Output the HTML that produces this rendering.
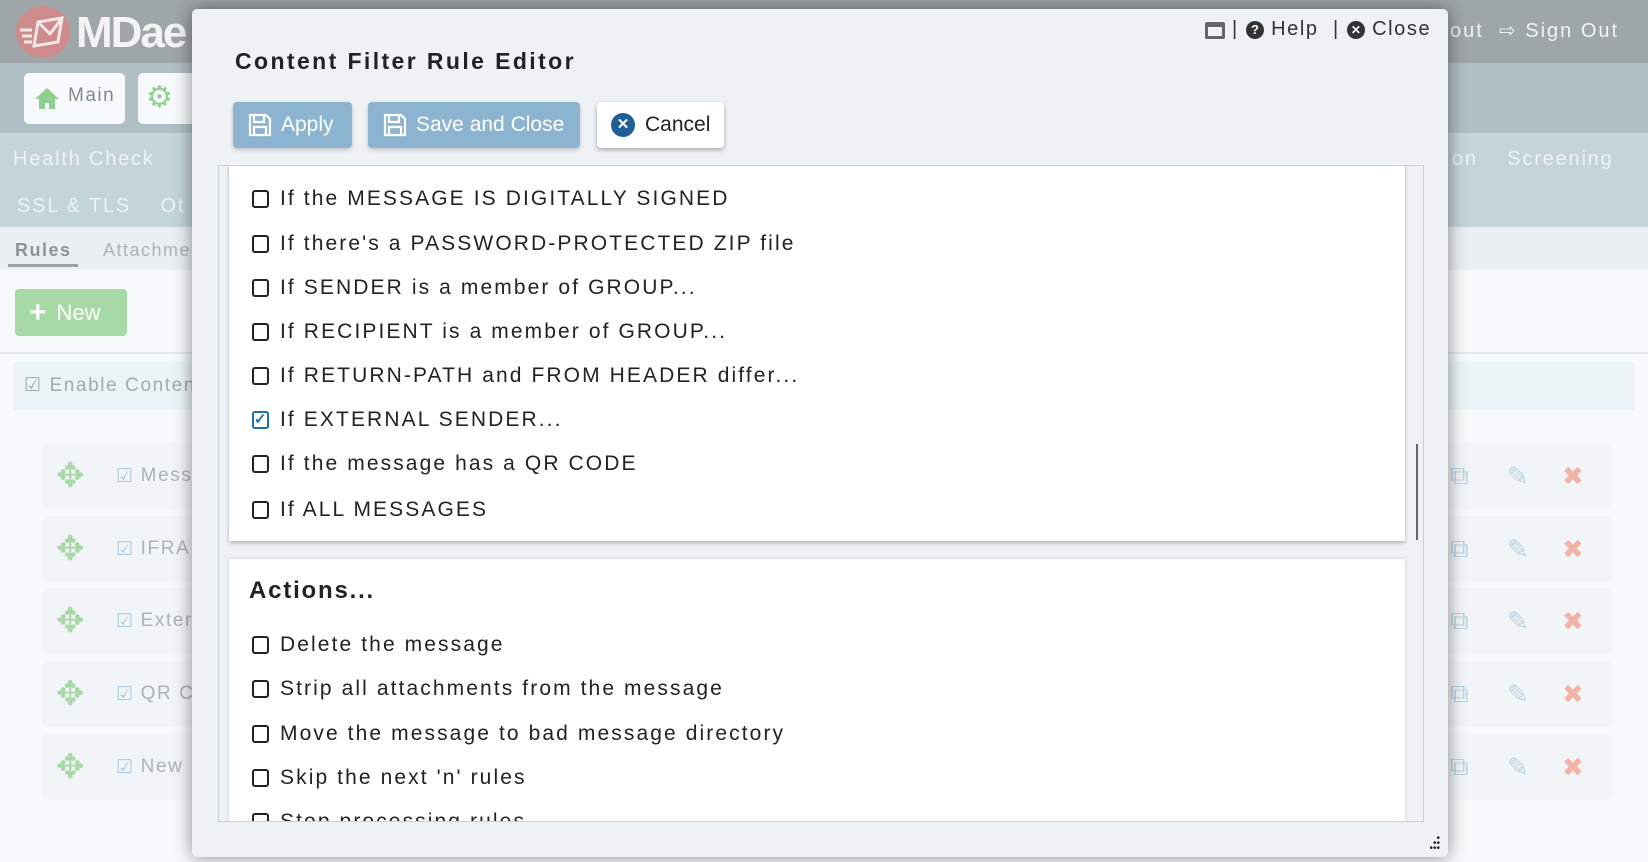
<!DOCTYPE html>
<html><head><meta charset="utf-8"><style>
*{box-sizing:border-box;margin:0;padding:0}
body{width:1648px;height:862px;overflow:hidden;position:relative;font-family:"Liberation Sans",sans-serif;background:#f7f9fa;letter-spacing:1px}
.abs{position:absolute}
.band1{left:0;top:0;width:1648px;height:63px;background:#9fa6a9}
.band2{left:0;top:63px;width:1648px;height:70px;background:#b0bec5}
.band3{left:0;top:133px;width:1648px;height:94px;background:#c4d4db}
.band4{left:0;top:227px;width:1648px;height:43px;background:#eaeff2}
.navt{color:#eef3f5;font-size:20px;letter-spacing:1.8px}
.row{left:42px;width:1571px;height:66px;background:#f2f5f7;border-radius:6px}
.rc{position:absolute;left:0;top:0;height:66px;width:100%;display:flex;align-items:center;font-size:19px;color:#aab3b8;letter-spacing:1.6px}
.drag{color:#a9d8a9;font-size:34px;margin-left:14px;width:60px}
.chk{color:#a9c8dc;margin-right:6px}
.ic{position:absolute;top:0;height:66px;display:flex;align-items:center;font-size:26px;letter-spacing:0}
.modal{left:192px;top:9px;width:1256px;height:848px;background:#eef2f5;border-radius:5px;box-shadow:0 0 18px rgba(0,0,0,.45)}
.btn{top:102px;height:46px;border-radius:4px;font-size:21px;display:flex;align-items:center;letter-spacing:0}
.blue{background:#8cb4d0;color:#fff;box-shadow:0 2px 4px rgba(0,0,0,.2)}
.item{left:252px;font-size:21px;color:#222;display:flex;align-items:center;height:30px;letter-spacing:2.1px}
.cb{width:17px;height:18px;border:2px solid #222;border-radius:3px;margin-right:11px;flex:none}
</style></head><body>
<div class="abs band1"></div>
<div class="abs" style="left:16px;top:6px;width:54px;height:52px;border-radius:50%;background:#cf8a8c"></div>
<svg class="abs" style="left:18px;top:12px" width="50" height="40"><g stroke="#f2e8e8" stroke-width="3" fill="none"><path d="M20 10 L44 6 L40 30 L16 34Z"/><path d="M20 10 L32 22 L44 6"/><path d="M2 18h12M4 24h10M6 30h8"/></g></svg>
<div class="abs" style="left:76px;top:8px;font-size:44px;font-weight:bold;color:#f4f4f4;letter-spacing:-2px">MDae</div>
<div class="abs" style="left:1450px;top:18px;font-size:20px;color:#f0f3f4;letter-spacing:2px">out &nbsp;⇨ Sign Out</div>
<div class="abs band2"></div>
<div class="abs" style="left:24px;top:73px;width:101px;height:51px;background:#f7f9fa;border-radius:5px"></div>
<svg class="abs" style="left:34px;top:86px" width="26" height="24"><path d="M13 2L1 13h4v10h6v-6h4v6h6V13h4z" fill="#8fcf8f"/></svg>
<div class="abs" style="left:68px;top:85px;font-size:19px;color:#7d8a90;letter-spacing:1.5px">Main</div>
<div class="abs" style="left:138px;top:73px;width:60px;height:51px;background:#f7f9fa;border-radius:5px"></div>
<div class="abs" style="left:146px;top:80px;font-size:30px;color:#8fcf8f">⚙</div>
<div class="abs band3"></div>
<div class="abs navt" style="left:13px;top:148px">Health Check</div>
<div class="abs navt" style="left:1452px;top:148px">on &nbsp;&nbsp;&nbsp;Screening</div>
<div class="abs navt" style="left:17px;top:195px">SSL &amp; TLS &nbsp;&nbsp;&nbsp;Ot</div>
<div class="abs band4"></div>
<div class="abs" style="left:15px;top:240px;font-size:18px;color:#8a9399;font-weight:bold;letter-spacing:1.5px">Rules</div>
<div class="abs" style="left:8px;top:264px;width:70px;height:3px;background:#9aa2a7"></div>
<div class="abs" style="left:103px;top:240px;font-size:18px;color:#aab3b8;letter-spacing:1.5px">Attachme</div>
<div class="abs" style="left:15px;top:289px;width:112px;height:47px;background:#a6d9a6;border-radius:4px;color:#fff;font-size:22px;display:flex;align-items:center;padding-left:14px;letter-spacing:0"><b style="font-size:30px;margin-right:10px">+</b>New</div>
<div class="abs" style="left:0;top:352px;width:1648px;height:2px;background:#e3e8eb"></div>
<div class="abs" style="left:14px;top:362px;width:1620px;height:48px;background:#eaf4f6"></div>
<div class="abs" style="left:24px;top:374px;font-size:19px;color:#a0aab0;letter-spacing:1.6px">☑ Enable Conten</div>

<div class="abs row" style="top:443px"><div class="rc"><span class="drag">✥</span><span class="chk">☑</span>Mess</div><div class="ic" style="left:1408px;color:#b9d3e2">⧉</div><div class="ic" style="left:1465px;color:#b9d3e2">✎</div><div class="ic" style="left:1520px;color:#f2b3a6">✖</div></div>
<div class="abs row" style="top:516px"><div class="rc"><span class="drag">✥</span><span class="chk">☑</span>IFRA</div><div class="ic" style="left:1408px;color:#b9d3e2">⧉</div><div class="ic" style="left:1465px;color:#b9d3e2">✎</div><div class="ic" style="left:1520px;color:#f2b3a6">✖</div></div>
<div class="abs row" style="top:588px"><div class="rc"><span class="drag">✥</span><span class="chk">☑</span>Exter</div><div class="ic" style="left:1408px;color:#b9d3e2">⧉</div><div class="ic" style="left:1465px;color:#b9d3e2">✎</div><div class="ic" style="left:1520px;color:#f2b3a6">✖</div></div>
<div class="abs row" style="top:661px"><div class="rc"><span class="drag">✥</span><span class="chk">☑</span>QR C</div><div class="ic" style="left:1408px;color:#b9d3e2">⧉</div><div class="ic" style="left:1465px;color:#b9d3e2">✎</div><div class="ic" style="left:1520px;color:#f2b3a6">✖</div></div>
<div class="abs row" style="top:734px"><div class="rc"><span class="drag">✥</span><span class="chk">☑</span>New</div><div class="ic" style="left:1408px;color:#b9d3e2">⧉</div><div class="ic" style="left:1465px;color:#b9d3e2">✎</div><div class="ic" style="left:1520px;color:#f2b3a6">✖</div></div>

<div class="abs modal"></div>
<div class="abs" style="left:1205px;top:22px;width:20px;height:17px;border:3px solid #666;border-top-width:5px;border-radius:2px"></div>
<div class="abs" style="left:1232px;top:18px;font-size:20px;color:#333;display:flex;align-items:center;letter-spacing:1.6px">|&nbsp;<span style="display:inline-block;width:18px;height:18px;border-radius:50%;background:#333;color:#fff;font-size:13px;text-align:center;line-height:18px;font-weight:bold;letter-spacing:0">?</span>&nbsp;Help&nbsp;&nbsp;|&nbsp;<span style="display:inline-block;width:18px;height:18px;border-radius:50%;background:#333;color:#fff;font-size:12px;text-align:center;line-height:18px;font-weight:bold;letter-spacing:0">✕</span>&nbsp;Close</div>
<div class="abs" style="left:235px;top:48px;font-size:23px;font-weight:bold;color:#222;letter-spacing:2.4px">Content Filter Rule Editor</div>
<div class="abs btn blue" style="left:233px;width:119px;padding-left:14px"><svg width="26" height="26" style="margin-right:8px"><path d="M3 3h16l4 4v16H3z M7 3v7h10V3 M7 23v-8h12v8" fill="none" stroke="#fff" stroke-width="2.2"/></svg>Apply</div>
<div class="abs btn blue" style="left:368px;width:212px;padding-left:14px"><svg width="26" height="26" style="margin-right:8px"><path d="M3 3h16l4 4v16H3z M7 3v7h10V3 M7 23v-8h12v8" fill="none" stroke="#fff" stroke-width="2.2"/></svg>Save and Close</div>
<div class="abs btn" style="left:597px;width:127px;background:#fff;color:#222;padding-left:14px;box-shadow:0 2px 5px rgba(0,0,0,.3)"><span style="display:inline-block;width:24px;height:24px;border-radius:50%;background:#1d5f96;color:#fff;font-size:15px;font-weight:bold;text-align:center;line-height:24px;margin-right:10px">✕</span>Cancel</div>
<div class="abs" style="left:218px;top:165px;width:1206px;height:657px;border:1.5px solid #c3d3db;background:#eef2f5;overflow:hidden">
<div class="abs" style="left:10px;top:-4px;width:1176px;height:379px;background:#fff;box-shadow:0 2px 4px rgba(0,0,0,.25)"></div>
<div class="abs" style="left:10px;top:393px;width:1176px;height:280px;background:#fff;box-shadow:0 0 4px rgba(0,0,0,.15)"></div>
<div class="abs" style="left:1197px;top:278px;width:2px;height:96px;background:#666"></div>
</div>
<div class="abs item" style="top:184px"><span class="cb"></span>If the MESSAGE IS DIGITALLY SIGNED</div>
<div class="abs item" style="top:229px"><span class="cb"></span>If there's a PASSWORD-PROTECTED ZIP file</div>
<div class="abs item" style="top:273px"><span class="cb"></span>If SENDER is a member of GROUP...</div>
<div class="abs item" style="top:317px"><span class="cb"></span>If RECIPIENT is a member of GROUP...</div>
<div class="abs item" style="top:361px"><span class="cb"></span>If RETURN-PATH and FROM HEADER differ...</div>
<div class="abs item" style="top:405px"><span class="cb" style="border-color:#1d6fb0;color:#1d6fb0;font-size:15px;line-height:13px;font-weight:bold;text-align:center">✓</span>If EXTERNAL SENDER...</div>
<div class="abs item" style="top:449px"><span class="cb"></span>If the message has a QR CODE</div>
<div class="abs item" style="top:495px"><span class="cb"></span>If ALL MESSAGES</div>
<div class="abs" style="left:249px;top:577px;font-size:24px;font-weight:bold;color:#222;letter-spacing:1.8px">Actions...</div>
<div class="abs item" style="top:630px"><span class="cb"></span>Delete the message</div>
<div class="abs item" style="top:674px"><span class="cb"></span>Strip all attachments from the message</div>
<div class="abs item" style="top:719px"><span class="cb"></span>Move the message to bad message directory</div>
<div class="abs item" style="top:763px"><span class="cb"></span>Skip the next 'n' rules</div>
<div class="abs" style="left:252px;top:807px;height:14px;overflow:hidden;width:400px"><div class="item" style="position:relative;left:0"><span class="cb"></span>Stop processing rules</div></div>
<div class="abs" style="left:1424px;top:836px;font-size:10px;line-height:5px;color:#222;letter-spacing:0;text-align:right;width:16px">•<br>••<br>•••</div>
</body></html>
